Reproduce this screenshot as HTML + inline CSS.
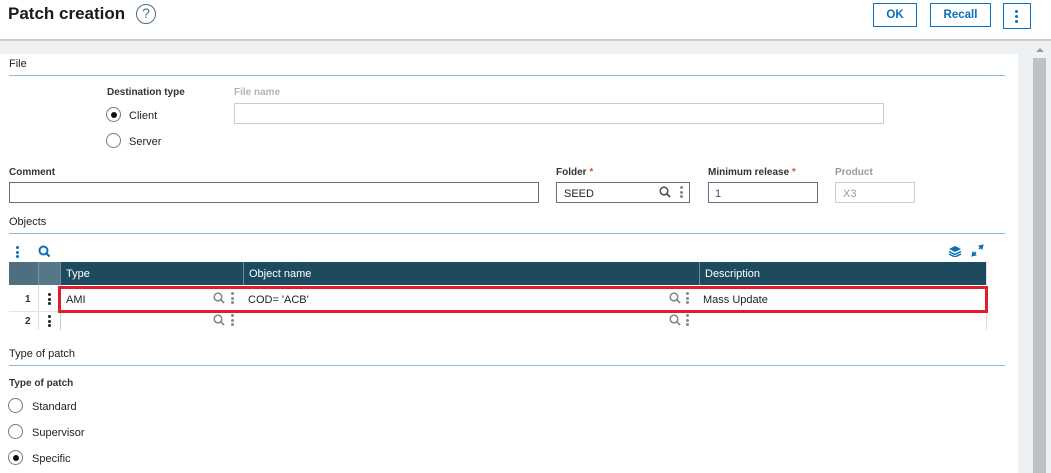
<!DOCTYPE html><html><head><style>
*{margin:0;padding:0;box-sizing:border-box}
body{width:1051px;height:473px;overflow:hidden;background:#eef1f3;font-family:"Liberation Sans",sans-serif;color:#222;position:relative}
.a{position:absolute}
.t{font-size:11px;white-space:nowrap;margin-top:1px}
.lb{font-size:10px;font-weight:bold;color:#333;white-space:nowrap;margin-top:1px}
.in{position:absolute;border:1px solid #c8cfd3;background:#fff;height:21px}
.ind{border-color:#5d7380}
.rad{position:absolute;width:15px;height:15px;border:1px solid #6d7f88;border-radius:50%;background:#fff}
.rad.on:after{content:"";position:absolute;left:3.5px;top:3.5px;width:6px;height:6px;border-radius:50%;background:#111}
.btn{position:absolute;border:1.5px solid #0a72c0;color:#0a6fb8;font-size:11.5px;font-weight:bold;text-align:center;background:#fff}
.sec{position:absolute;left:9px;width:996px;height:1px;background:#8fb9d8}
.th{position:absolute;top:262px;height:23px;background:#1d4a5f;color:#fff;font-size:11px;line-height:24px;padding-left:5px;border-left:1px solid #6d8a99}
.dots{position:absolute;width:3px}
.dots i{display:block;width:3px;height:3px;border-radius:50%;background:#888;margin-bottom:1.5px}
</style></head><body>
<div class="a" style="left:0;top:0;width:1051px;height:41px;background:#fff;border-bottom:2px solid #c9cbcd"></div>
<div class="a" style="left:8px;top:4px;font-size:17px;font-weight:bold;color:#1a1a1a">Patch creation</div>
<div class="a" style="left:136px;top:4px;width:20px;height:20px;border:1.5px solid #4a6d82;border-radius:50%;color:#4a6d82;font-size:14px;text-align:center;line-height:17px">?</div>
<div class="btn" style="left:873px;top:3px;width:44px;height:24px;line-height:23px">OK</div>
<div class="btn" style="left:930px;top:3px;width:61px;height:24px;line-height:23px">Recall</div>
<div class="btn" style="left:1003px;top:3px;width:28px;height:26px"><div style="position:absolute;left:11px;top:6px"><div style="width:3px;height:3px;border-radius:50%;background:#0a6fb8;margin-bottom:2px"></div><div style="width:3px;height:3px;border-radius:50%;background:#0a6fb8;margin-bottom:2px"></div><div style="width:3px;height:3px;border-radius:50%;background:#0a6fb8"></div></div></div>
<div class="a" style="left:0;top:54px;width:1018px;height:419px;background:#fff"></div>
<div class="a" style="left:1033px;top:58px;width:13px;height:415px;background:#c1c1c1"></div>
<div class="a" style="left:1036px;top:48px;width:0;height:0;border-left:4px solid transparent;border-right:4px solid transparent;border-bottom:4px solid #999"></div>

<div class="a t" style="left:9px;top:57px">File</div>
<div class="sec" style="top:75px"></div>
<div class="a lb" style="left:107px;top:86px">Destination type</div>
<div class="a lb" style="left:234px;top:86px;color:#b3b3b3">File name</div>
<div class="rad on" style="left:106px;top:107px"></div><div class="a t" style="left:129px;top:109px">Client</div>
<div class="rad" style="left:106px;top:133px"></div><div class="a t" style="left:129px;top:135px">Server</div>
<div class="in" style="left:234px;top:103px;width:650px;height:21px"></div>

<div class="a lb" style="left:9px;top:166px">Comment</div>
<div class="in ind" style="left:9px;top:182px;width:530px"></div>
<div class="a lb" style="left:556px;top:166px">Folder <span style="color:#e0531f">*</span></div>
<div class="in ind" style="left:556px;top:182px;width:134px"></div>
<div class="a t" style="left:564px;top:187px">SEED</div>
<svg class="a" style="left:659px;top:186px" width="12" height="12"><circle cx="5" cy="5" r="3.8" stroke="#555" stroke-width="1.6" fill="none"/><path d="M8 8l3 3" stroke="#555" stroke-width="1.8"/></svg>
<div class="dots" style="left:680px;top:186px"><i></i><i></i><i></i></div>
<div class="a lb" style="left:708px;top:166px">Minimum release <span style="color:#e0531f">*</span></div>
<div class="in ind" style="left:708px;top:182px;width:110px"></div>
<div class="a t" style="left:715px;top:187px;color:#5a3d7a">1</div>
<div class="a lb" style="left:835px;top:166px;color:#999">Product</div>
<div class="in" style="left:835px;top:182px;width:80px"></div>
<div class="a t" style="left:843px;top:187px;color:#999">X3</div>

<div class="a t" style="left:9px;top:215px">Objects</div>
<div class="sec" style="top:233px"></div>
<div class="dots" style="left:16px;top:246px"><i style="background:#0a6fb8"></i><i style="background:#0a6fb8"></i><i style="background:#0a6fb8"></i></div>
<svg class="a" style="left:38px;top:245px" width="13" height="13"><circle cx="5.5" cy="5.5" r="4" stroke="#0a6fb8" stroke-width="2" fill="none"/><path d="M8.5 8.5l3 3" stroke="#0a6fb8" stroke-width="2.2"/></svg>
<svg class="a" style="left:948px;top:245px" width="14" height="12"><path d="M7 1l6 3-6 3-6-3z" fill="#0a6fb8"/><path d="M1 6.5l6 3 6-3M1 9l6 3 6-3" stroke="#0a6fb8" stroke-width="1.5" fill="none"/></svg>
<svg class="a" style="left:971px;top:244px" width="13" height="13"><path d="M12 1l-4 1 3 3zM1 12l4-1-3-3z" fill="#0a6fb8" stroke="#0a6fb8"/><path d="M10 3l-2 2M3 10l2-2" stroke="#0a6fb8" stroke-width="1.5"/></svg>

<div class="a" style="left:9px;top:262px;width:29px;height:23px;background:#4f6f80"></div>
<div class="a" style="left:38px;top:262px;width:22px;height:23px;background:#557787;border-left:1px solid #7d96a3"></div>
<div class="th" style="left:60px;width:183px">Type</div>
<div class="th" style="left:243px;width:456px">Object name</div>
<div class="th" style="left:699px;width:288px">Description</div>
<div class="a" style="left:986px;top:262px;width:1px;height:68px;background:#ddd"></div>
<div class="a" style="left:60px;top:285px;width:1px;height:45px;background:#ccc"></div>
<div class="a" style="left:38px;top:285px;width:1px;height:45px;background:#ddd"></div>
<div class="a" style="left:9px;top:311px;width:51px;height:1px;background:#e3e3e3"></div>
<div class="a lb" style="left:25px;top:293px;color:#333">1</div>
<div class="a lb" style="left:25px;top:315px;color:#333">2</div>
<div class="dots" style="left:48px;top:293px"><i style="background:#222"></i><i style="background:#222"></i><i style="background:#222"></i></div>
<div class="dots" style="left:48px;top:315px"><i style="background:#222"></i><i style="background:#222"></i><i style="background:#222"></i></div>
<div class="a" style="left:58px;top:286px;width:930px;height:27px;border:3px solid #e21c2a"></div>
<div class="a t" style="left:66px;top:293px">AMI</div>
<div class="a t" style="left:248px;top:293px">COD= 'ACB'</div>
<div class="a t" style="left:703px;top:293px">Mass Update</div>
<svg class="a" style="left:213px;top:292px" width="12" height="12"><circle cx="5" cy="5" r="3.8" stroke="#888" stroke-width="1.6" fill="none"/><path d="M8 8l3 3" stroke="#888" stroke-width="1.8"/></svg>
<div class="dots" style="left:231px;top:292px"><i></i><i></i><i></i></div>
<svg class="a" style="left:213px;top:314px" width="12" height="12"><circle cx="5" cy="5" r="3.8" stroke="#888" stroke-width="1.6" fill="none"/><path d="M8 8l3 3" stroke="#888" stroke-width="1.8"/></svg>
<div class="dots" style="left:231px;top:314px"><i></i><i></i><i></i></div>
<svg class="a" style="left:669px;top:292px" width="12" height="12"><circle cx="5" cy="5" r="3.8" stroke="#888" stroke-width="1.6" fill="none"/><path d="M8 8l3 3" stroke="#888" stroke-width="1.8"/></svg>
<div class="dots" style="left:686px;top:292px"><i></i><i></i><i></i></div>
<svg class="a" style="left:669px;top:314px" width="12" height="12"><circle cx="5" cy="5" r="3.8" stroke="#888" stroke-width="1.6" fill="none"/><path d="M8 8l3 3" stroke="#888" stroke-width="1.8"/></svg>
<div class="dots" style="left:686px;top:314px"><i></i><i></i><i></i></div>

<div class="a t" style="left:9px;top:347px">Type of patch</div>
<div class="sec" style="top:365px"></div>
<div class="a lb" style="left:9px;top:377px">Type of patch</div>
<div class="rad" style="left:8px;top:398px"></div><div class="a t" style="left:32px;top:400px">Standard</div>
<div class="rad" style="left:8px;top:424px"></div><div class="a t" style="left:32px;top:426px">Supervisor</div>
<div class="rad on" style="left:8px;top:450px"></div><div class="a t" style="left:32px;top:452px">Specific</div>
</body></html>
